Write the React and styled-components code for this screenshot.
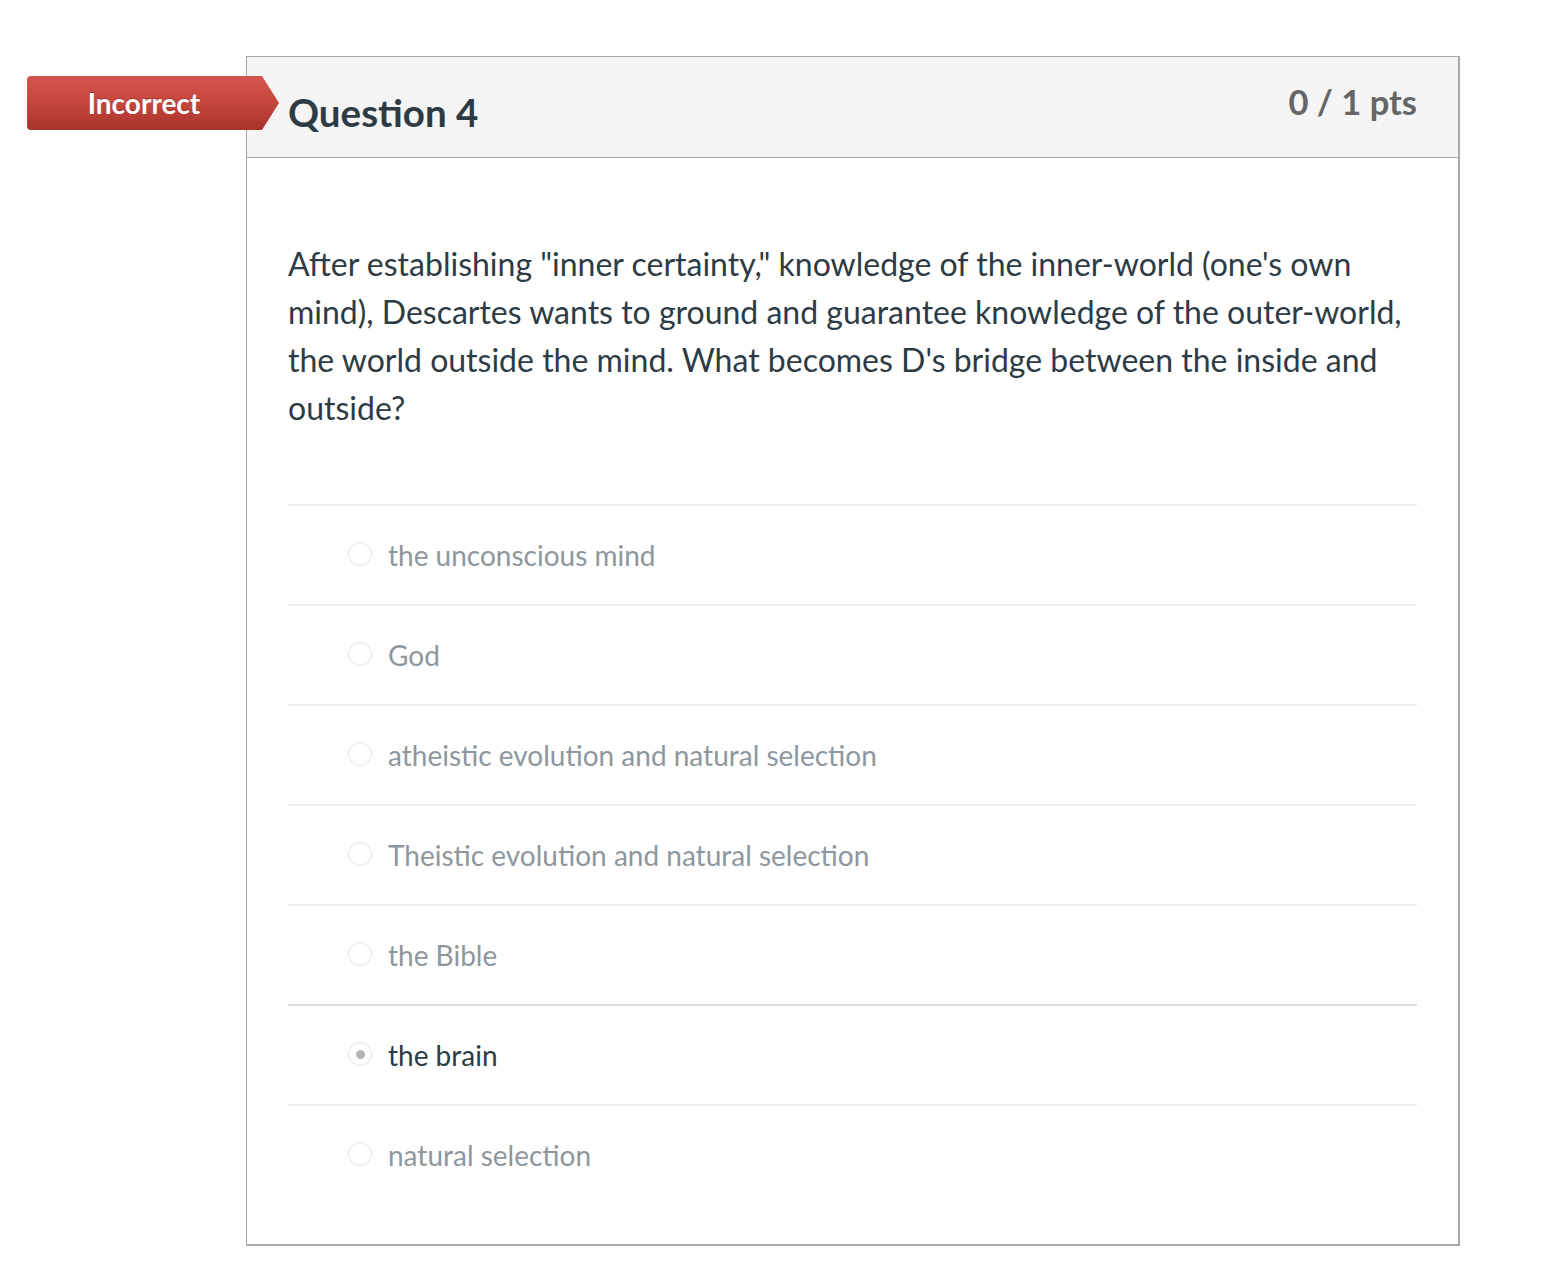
import { styled, createGlobalStyle } from "styled-components"

const GlobalStyle = createGlobalStyle`
    body {
        margin: 0;
        background: #fff;
        font-family: Lato, "Open Sans", sans-serif;
    }
`

const Page = styled.div`
    padding: 56px 0 38px 246px;
`

const Card = styled.div`
    position: relative;
    width: 1211px;
    border: 1px solid #a8a8a8;
    border-right-width: 2px;
    border-bottom-width: 2px;
    background: #fff;
`

const Banner = styled.div`
    position: absolute;
    left: -220px;
    top: 19px;
    width: 252px;
    height: 54px;
    box-sizing: border-box;
    padding-right: 18px;
    display: flex;
    align-items: center;
    justify-content: center;
    color: #fff;
    font-weight: 700;
    font-size: 28px;
    border-radius: 4px 0 0 4px;
    background: linear-gradient(180deg, #d5554c 0%, #c2443b 55%, #a9322b 100%);
    clip-path: polygon(0 0, calc(100% - 17px) 0, 100% 50%, calc(100% - 17px) 100%, 0 100%);
    text-shadow: 0 -1px 0 rgba(0, 0, 0, 0.25);
`

const Header = styled.header`
    height: 101px;
    box-sizing: border-box;
    background: #f5f5f5;
    border-bottom: 1px solid #a8a8a8;
    display: flex;
    justify-content: space-between;
    padding: 0 41px 0 41px;
`

const Titulo = styled.h2`
    margin: 0;
    padding-top: 33px;
    font-size: 38.5px;
    font-weight: 700;
    color: #2d3b45;
    line-height: 44px;
`

const Pontos = styled.div`
    padding-top: 25px;
    font-size: 34.5px;
    font-weight: 700;
    color: #666;
    line-height: 40px;
`

const Corpo = styled.div`
    padding: 82px 41px 40px 41px;
`

const Enunciado = styled.p`
    margin: 0 0 72px 0;
    font-size: 32px;
    line-height: 48px;
    color: #2d3b45;
`

const ListaRespostas = styled.ul`
    list-style: none;
    padding: 0;
    margin: 0;
`

const Resposta = styled.li`
    height: 100px;
    box-sizing: border-box;
    border-top: 2px solid ${({ $marcada }) => ($marcada ? "#dcdcdc" : "#ebedef")};
    display: flex;
    align-items: center;
    gap: 16px;
    padding-left: 60px;
    font-size: 28px;
    color: ${({ $marcada }) => ($marcada ? "#2d3b45" : "#8e979e")};
`

const Radio = styled.span`
    width: 24px;
    height: 24px;
    box-sizing: border-box;
    border-radius: 50%;
    border: 1px solid #e4e4e4;
    background: #fff;
    display: flex;
    align-items: center;
    justify-content: center;
    flex-shrink: 0;
    margin-top: -2px;

    &::after {
        content: "";
        width: 9px;
        height: 9px;
        border-radius: 50%;
        background: ${({ $marcada }) => ($marcada ? "#b4b4b4" : "transparent")};
    }
`

const respostas = [
    { id: 1, texto: "the unconscious mind" },
    { id: 2, texto: "God" },
    { id: 3, texto: "atheistic evolution and natural selection" },
    { id: 4, texto: "Theistic evolution and natural selection" },
    { id: 5, texto: "the Bible" },
    { id: 6, texto: "the brain", marcada: true },
    { id: 7, texto: "natural selection" },
]

function App() {
    return (
        <>
            <GlobalStyle />
            <Page>
                <Card>
                    <Banner>Incorrect</Banner>
                    <Header>
                        <Titulo>Question 4</Titulo>
                        <Pontos>0 / 1 pts</Pontos>
                    </Header>
                    <Corpo>
                        <Enunciado>
                            After establishing "inner certainty," knowledge of the inner-world (one's own
                            mind), Descartes wants to ground and guarantee knowledge of the outer-world,
                            the world outside the mind. What becomes D's bridge between the inside and
                            outside?
                        </Enunciado>
                        <ListaRespostas>
                            {respostas.map((item) => (
                                <Resposta key={item.id} $marcada={item.marcada}>
                                    <Radio $marcada={item.marcada} />
                                    {item.texto}
                                </Resposta>
                            ))}
                        </ListaRespostas>
                    </Corpo>
                </Card>
            </Page>
        </>
    )
}

export default App
